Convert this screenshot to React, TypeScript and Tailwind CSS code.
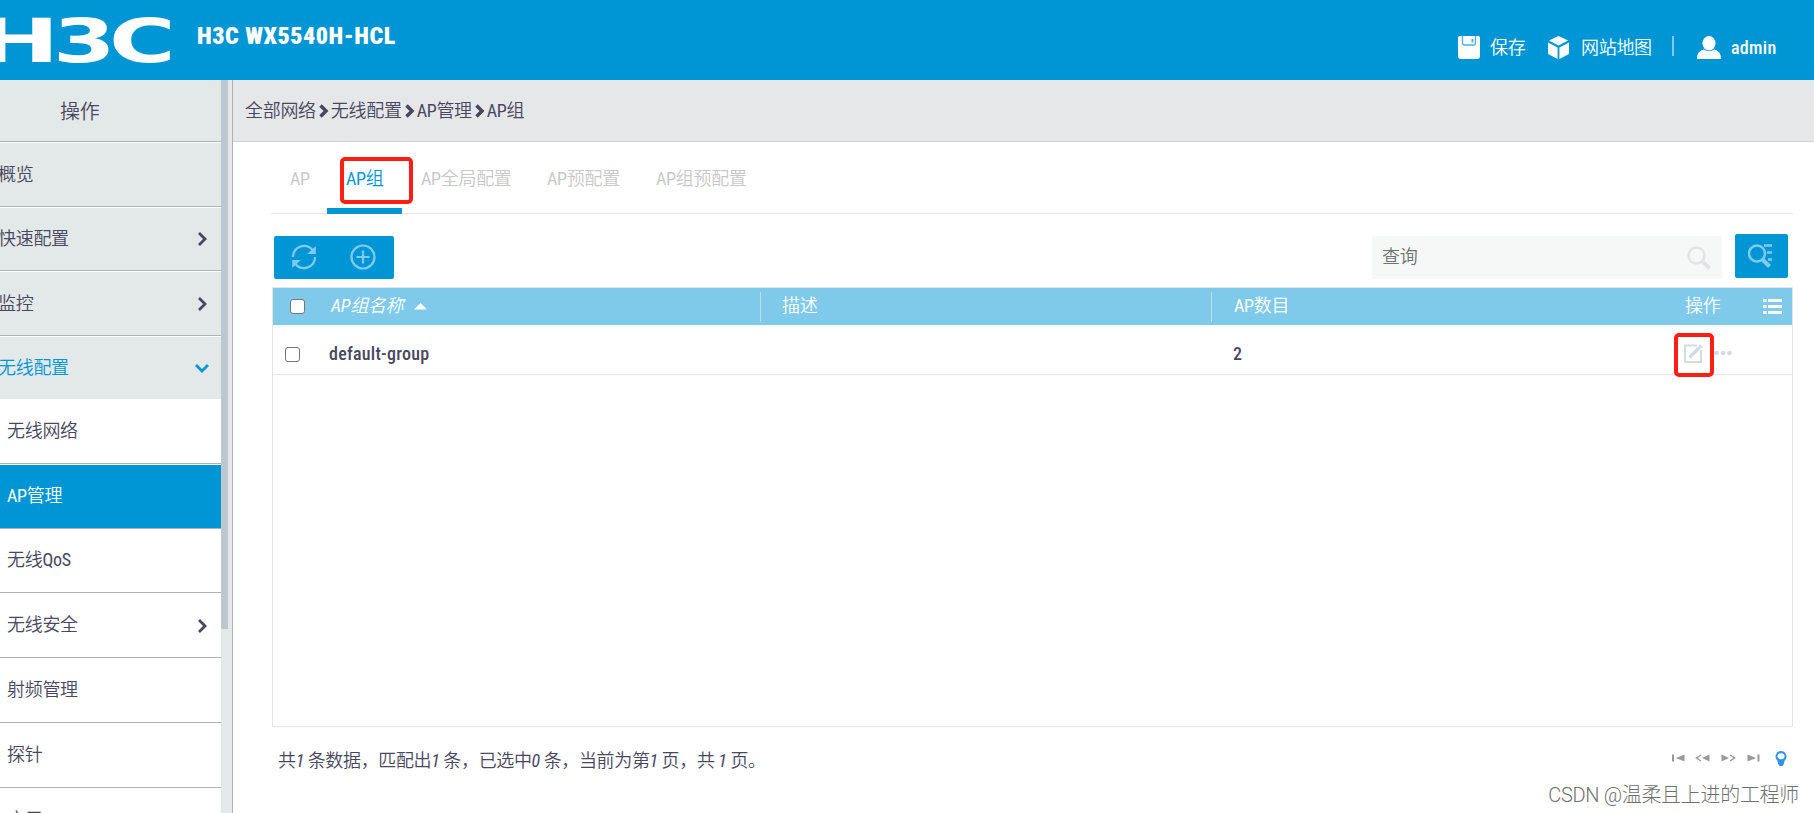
"use client"

import { useState, type ReactNode } from "react"

const menuItems = [
  { label: "概览", height: "h-[65px]", arrow: "" },
  { label: "快速配置", height: "h-[64px]", arrow: "right" },
  { label: "监控", height: "h-[65px]", arrow: "right" },
  { label: "无线配置", height: "h-[63px]", arrow: "down" },
]

const subItems = [
  { label: "无线网络", height: "h-[65px]", arrow: false },
  { label: "AP管理", height: "h-[65px]", arrow: false },
  { label: "无线QoS", height: "h-[64px]", arrow: false },
  { label: "无线安全", height: "h-[65px]", arrow: true },
  { label: "射频管理", height: "h-[65px]", arrow: false },
  { label: "探针", height: "h-[65px]", arrow: false },
  { label: "应用", height: "h-[65px]", arrow: false },
]

const tabs = [
  { label: "AP", width: "w-[56px]" },
  { label: "AP组", width: "w-[75px]" },
  { label: "AP全局配置", width: "w-[126px]" },
  { label: "AP预配置", width: "w-[109px]" },
  { label: "AP组预配置", width: "w-[128px]" },
]

const crumbs = ["全部网络", "无线配置", "AP管理", "AP组"]

function Chevron({ down = false }: { down?: boolean }) {
  return (
    <svg width="14" height="14" viewBox="0 0 14 14" fill="none" stroke="currentColor" strokeWidth="2.8">
      {down ? <path d="M1 4l6 6 6-6" /> : <path d="M4 1l6 6-6 6" />}
    </svg>
  )
}

function Logo() {
  return (
    <svg width="172" height="80" className="shrink-0" fill="#fff" fontFamily="DejaVu Sans" fontWeight="bold" fontSize="60">
      <text x="-22" y="62" textLength="81" lengthAdjust="spacingAndGlyphs">H</text>
      <text x="53" y="62" textLength="62" lengthAdjust="spacingAndGlyphs">3</text>
      <text x="109" y="62" textLength="66" lengthAdjust="spacingAndGlyphs">C</text>
    </svg>
  )
}

function Header() {
  return (
    <header className="flex h-20 bg-[#0096d6] text-white">
      <Logo />
      <div className="ml-[25px] mt-[20px] h-8 whitespace-nowrap text-[24px] leading-8 font-black tracking-[0.5px]">
        H3C WX5540H-HCL
      </div>
      <div className="ml-auto mt-[33px] mr-[38px] flex h-7 items-center whitespace-nowrap">
        <svg width="22" height="23" viewBox="0 0 22 23">
          <path d="M2 0h18a2 2 0 0 1 2 2v18a3 3 0 0 1-3 3H3a3 3 0 0 1-3-3V2a2 2 0 0 1 2-2z" fill="#fff" />
          <path d="M4.5 0v7a2 2 0 0 0 2 2h9a2 2 0 0 0 2-2V0" fill="#fff" stroke="#4cb5e2" strokeWidth="1.4" />
          <rect x="13.5" y="3" width="2" height="3.5" fill="#4cb5e2" />
        </svg>
        <span className="ml-[10px] w-[36px]">保存</span>
        <svg className="ml-[22px]" width="21" height="23" viewBox="0 0 21 23" fill="#fff">
          <path d="M10.5 0L20 4.5 10.5 9.5 1 4.5zM0 6.5l9.6 5V23L1 18.5a2 2 0 0 1-1-1.6zM21 6.5l-9.6 5V23l8.6-4.5a2 2 0 0 0 1-1.6z" />
        </svg>
        <span className="ml-[12px] w-[71px]">网站地图</span>
        <div className="ml-[20px] mb-[3px] h-5 w-[2px] bg-[#7fcaea]" />
        <svg className="ml-[23px]" width="24" height="23" viewBox="0 0 24 23" fill="#fff">
          <ellipse cx="12" cy="7.3" rx="6.5" ry="7.3" />
          <path d="M0 23c0-5 2-8.500 7-9.500 3 2.300 7 2.300 10 0 5 1 7 4.500 7 9.500z" />
        </svg>
        <span className="ml-[10px] w-[45px] font-medium tracking-[0.3px]">admin</span>
      </div>
    </header>
  )
}

function Sidebar() {
  const [active, setActive] = useState("AP管理")

  return (
    <aside className="flex w-[233px] shrink-0 border-r border-[#b1b1b1] bg-[#e3e8e8]">
      <div className="w-[221px] overflow-hidden">
        <div className="h-[62px] border-b border-[#b1b1b1] pl-[60px] text-[20px] leading-[64px]">操作</div>
        {menuItems.map((item) => (
          <div
            key={item.label}
            className={`flex items-center justify-between border-t border-t-white pr-[12px] ${item.height} ${
              item.arrow === "down" ? "text-[#0096d6]" : "border-b border-b-[#b1b1b1]"
            }`}
          >
            <span className="-ml-[2px] pb-px">{item.label}</span>
            {item.arrow && <Chevron down={item.arrow === "down"} />}
          </div>
        ))}
        {subItems.map((item) => (
          <div
            key={item.label}
            onClick={() => setActive(item.label)}
            className={`flex items-center justify-between border-t border-b border-t-white border-b-[#b1b1b1] pr-[12px] pl-[7px] ${item.height} ${
              item.label === active ? "bg-[#0096d6] text-white" : "bg-white"
            }`}
          >
            <span className="pb-[3px]">{item.label}</span>
            {item.arrow && <Chevron />}
          </div>
        ))}
      </div>
      <div className="h-[549px] w-[7px] bg-[#bec6ce]" />
    </aside>
  )
}

function Tabs() {
  const [active, setActive] = useState("AP组")

  return (
    <nav className="ml-[38px] mr-[21px] flex h-[72px] shrink-0 border-b border-[#e3e6e6] text-[#c9c9c9]">
      {tabs.map((tab) => (
        <button
          key={tab.label}
          onClick={() => setActive(tab.label)}
          className={`relative -mb-px h-[72px] pl-[19px] text-left whitespace-nowrap ${tab.width} ${
            tab.label === active ? "border-b-[6px] border-[#0096d6] pt-[7px] text-[#0096d6]" : "pt-px"
          }`}
        >
          {tab.label}
          {tab.label === "AP组" && (
            <span className="absolute top-[15px] left-[13px] h-[47px] w-[73px] rounded-[5px] border-4 border-[#fe1e12]" />
          )}
        </button>
      ))}
    </nav>
  )
}

function Toolbar() {
  return (
    <div className="ml-[41px] mr-[26px] mt-[20px] flex h-[45px] shrink-0 items-start">
      <div className="mt-[2px] flex h-[43px] w-[120px] items-center rounded-[2px] bg-[#0096d6] text-[#80cbeb]">
        <svg className="ml-[17px] mb-[2px]" width="26" height="26" viewBox="0 0 26 26" fill="none" stroke="currentColor" strokeWidth="2.2">
          <path d="M2 13A11 11 0 0 1 21.500 6M24 13A11 11 0 0 1 4.500 20" />
          <path d="M24.800 2v8h-8.500zM1.200 24v-8h8.500z" fill="currentColor" stroke="none" />
        </svg>
        <svg className="ml-[33px] mb-[2px]" width="26" height="26" viewBox="0 0 26 26" fill="none" stroke="currentColor" strokeWidth="2.2">
          <circle cx="13" cy="13" r="11.500" />
          <path d="M13 6.500v13M6.500 13h13" />
        </svg>
      </div>
      <div className="mt-[2px] ml-auto flex h-[43px] w-[350px] items-center bg-[#f6f8f8] pr-[11px] pl-[10px]">
        <input placeholder="查询" className="mb-[3px] w-0 flex-1 outline-none placeholder:text-[#707070]" />
        <svg width="24" height="24" viewBox="0 0 24 24" fill="none" stroke="#e2e5e5">
          <circle cx="9.500" cy="9.500" r="8" strokeWidth="2.500" />
          <path d="M15.500 15.500l7 7" strokeWidth="4" />
        </svg>
      </div>
      <button className="ml-[13px] flex h-11 w-[53px] items-center justify-center rounded-[2px] bg-[#0096d6]">
        <svg className="mr-[3px]" width="24" height="24" viewBox="0 0 24 24" fill="none" stroke="#80cbeb">
          <circle cx="9" cy="9.500" r="8" strokeWidth="2.500" />
          <path d="M14.500 15.500l7 7" strokeWidth="4" />
          <path d="M16 1.500h8M19 8.500h5M20 15.500h4" strokeWidth="2.500" />
        </svg>
      </button>
    </div>
  )
}

function Checkbox() {
  return (
    <input
      type="checkbox"
      className="h-[15px] w-[15px] shrink-0 appearance-none rounded-[3px] border-[1.500px] border-[#767676] bg-white checked:bg-[#0096d6]"
    />
  )
}

function GroupTable() {
  return (
    <div className="mr-[21px] ml-[39px] mt-[8px] flex h-[440px] shrink-0 flex-col border border-[#e3e6e6]">
      <div className="flex h-[37px] items-center bg-[#7fc9ea] text-white">
        <div className="flex w-[58px] items-center pl-[17px]">
          <Checkbox />
        </div>
        <div className="flex h-[30px] w-[430px] items-center border-r border-[#c5dbe5] italic">
          <span className="mb-[3px]">AP组名称</span>
          <svg className="ml-[11px]" width="13" height="7" viewBox="0 0 13 7" fill="#fff">
            <path d="M6.500 0L13 6.500H0z" />
          </svg>
        </div>
        <div className="flex h-[30px] w-[451px] items-center border-r border-[#c5dbe5] pl-[21px]">
          <span className="mb-[3px]">描述</span>
        </div>
        <div className="w-[473px] pb-[2px] pl-[22px]">AP数目</div>
        <div className="w-[78px] pb-[2px]">操作</div>
        <svg width="19" height="15" viewBox="0 0 19 15" fill="#fff">
          <path d="M0 0h3.500v3H0zM5 0h14v3H5zM0 6h3.500v3H0zM5 6h14v3H5zM0 12h3.500v3H0zM5 12h14v3H5z" />
        </svg>
      </div>
      <div className="flex h-[50px] items-center border-b border-[#e3e6e6] pt-[9px]">
        <div className="flex w-[56px] items-center pl-[12px]">
          <Checkbox />
        </div>
        <div className="w-[904px] pb-[2px] font-medium tracking-[0.25px]">default-group</div>
        <div className="w-[451px] pb-[2px] font-medium">2</div>
        <div className="relative -top-px flex items-center">
          <svg width="19" height="19" viewBox="0 0 19 19" fill="none" stroke="#d4dce3">
            <path d="M13 1.500H1V18h16V6" strokeWidth="2" />
            <path d="M5.500 13.500L17.500 1.500" strokeWidth="3.500" />
          </svg>
          <span className="absolute -top-[11px] -left-[10px] h-[44px] w-[40px] rounded-[5px] border-4 border-[#fe1e12]" />
          <svg className="ml-[11px]" width="18" height="6" viewBox="0 0 18 6" fill="#d4dce3">
            <circle cx="2.500" cy="3" r="2.300" />
            <circle cx="9" cy="3" r="2.300" />
            <circle cx="15.500" cy="3" r="2.300" />
          </svg>
        </div>
      </div>
    </div>
  )
}

function PagerIcon({ children, width, gap }: { children: ReactNode; width: number; gap: string }) {
  return (
    <svg className={gap} width={width} height="8" viewBox={`0 0 ${width} 8`} fill="#999" stroke="none">
      {children}
    </svg>
  )
}

function Pager() {
  return (
    <div className="mr-[27px] ml-[45px] mt-[15px] flex h-[36px] shrink-0 items-center">
      <div className="tracking-[-0.35px] whitespace-nowrap">
        共<i>1</i> 条数据，匹配出<i>1</i> 条，已选中<i>0</i> 条，当前为第<i>1</i> 页，共 <i>1</i> 页。
      </div>
      <div className="mb-[4px] ml-auto flex items-center">
        <PagerIcon width={13} gap="mr-[10px]">
          <path d="M0 .5h2v7H0zM12.500 .5v7L4 4z" />
        </PagerIcon>
        <PagerIcon width={15} gap="mr-[11px]">
          <path d="M14.500 .5v7L7 4z" />
          <path d="M6 1L1.500 4 6 7" fill="none" stroke="#999" strokeWidth="1.500" />
        </PagerIcon>
        <PagerIcon width={15} gap="mr-[11px]">
          <path d="M.5 .5v7L8 4z" />
          <path d="M9 1l4.500 3L9 7" fill="none" stroke="#999" strokeWidth="1.500" />
        </PagerIcon>
        <PagerIcon width={13} gap="mr-[15px]">
          <path d="M.5 .5v7L9 4zM10.500 .5h2v7h-2z" />
        </PagerIcon>
        <svg width="12" height="15" viewBox="0 0 12 15">
          <path d="M6 0a5.500 5.500 0 0 1 3.500 9.700V11h-7V9.700A5.500 5.500 0 0 1 6 0z" fill="#2f93f5" />
          <ellipse cx="6" cy="5.300" rx="3.500" ry="3" fill="#fff" />
          <path d="M3 11h6v1.500L7.500 15h-3L3 12.500z" fill="#2f93f5" />
        </svg>
      </div>
    </div>
  )
}

export default function App() {
  return (
    <div className="relative flex h-[813px] w-[1814px] flex-col overflow-hidden bg-white font-['Roboto_Condensed','Roboto','Noto_Sans_CJK_SC_DemiLight','Noto_Sans_CJK_SC',sans-serif] text-[18px] font-stretch-condensed tracking-[-0.3px] text-[#484760]">
      <Header />
      <div className="flex h-[733px]">
        <Sidebar />
        <main className="flex min-w-0 flex-1 flex-col">
          <div className="flex h-[62px] shrink-0 items-center border-b border-[#d0d2d5] bg-[#e5e7e9] pl-[12px]">
            {crumbs.map((crumb, i) => (
              <div key={crumb} className="flex items-center">
                {i > 0 && (
                  <svg className="mr-[2px] ml-[3px]" width="10" height="14" viewBox="0 0 10 14" fill="none" stroke="currentColor" strokeWidth="3.500">
                    <path d="M1.500 1.500L7 7l-5.500 5.500" />
                  </svg>
                )}
                <span>{crumb}</span>
              </div>
            ))}
          </div>
          <Tabs />
          <Toolbar />
          <GroupTable />
          <Pager />
        </main>
      </div>
      <div className="absolute right-[15px] bottom-[3px] font-['Roboto','Noto_Sans_CJK_SC_Light','Noto_Sans_CJK_SC',sans-serif] text-[20px] leading-[30px] font-light font-stretch-normal whitespace-nowrap text-[#6f6f6f]">
        CSDN @温柔且上进的工程师
      </div>
    </div>
  )
}
